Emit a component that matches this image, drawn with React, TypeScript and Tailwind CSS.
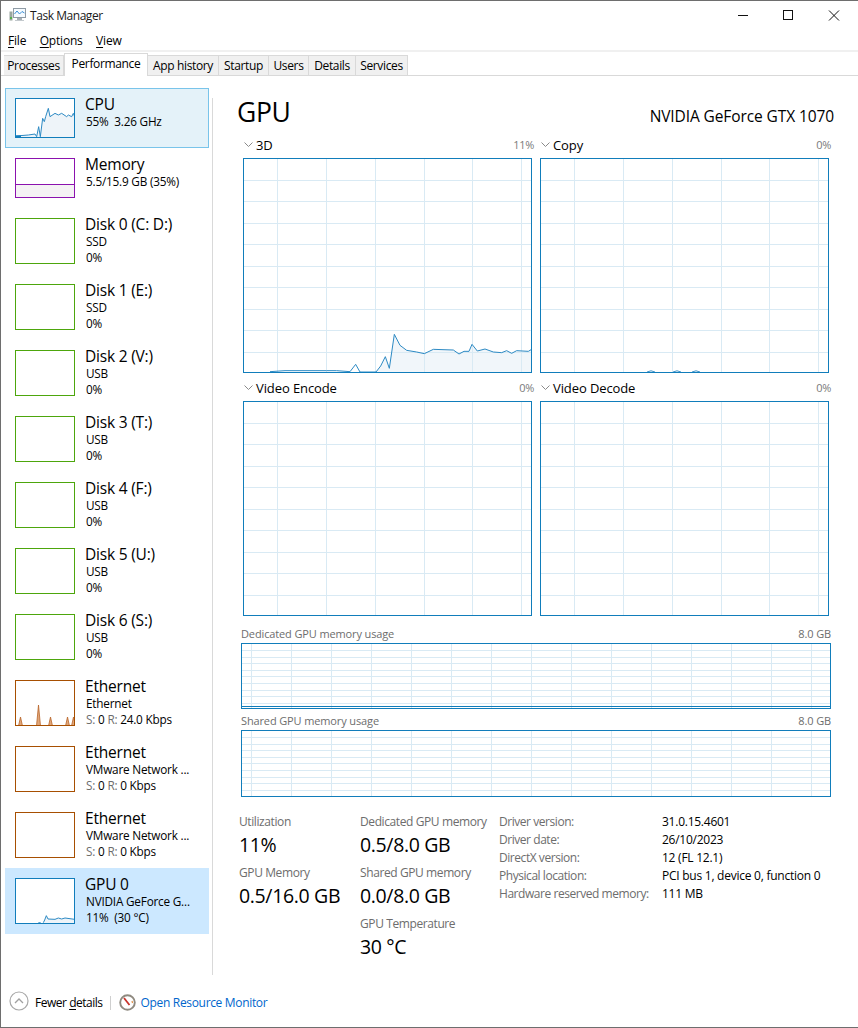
import React from "react";

const BLUE = "#117DBB";
const GRID = "#D9EAF4";
const FILL = "#F1F6FA";

type Pt = [number, number];
const path = (pts: Pt[]) => pts.map((p, i) => `${i ? "L" : "M"}${p[0]} ${p[1]}`).join(" ");

function BigChart({ w, h, xs, ys, children }: { w: number; h: number; xs: number[]; ys: number[]; children?: React.ReactNode }) {
  return (
    <svg width={w} height={h} className="block" shapeRendering="crispEdges">
      <rect width={w} height={h} fill="#fff" />
      {xs.map((x) => (
        <rect key={`x${x}`} x={x} y={0} width={1} height={h} fill={GRID} />
      ))}
      {ys.map((y) => (
        <rect key={`y${y}`} x={0} y={y} width={w} height={1} fill={GRID} />
      ))}
      {children}
      <rect x={0.5} y={0.5} width={w - 1} height={h - 1} fill="none" stroke={BLUE} strokeWidth={1} />
    </svg>
  );
}

const bigXs = [34, 83, 132, 181, 229, 278];
const bigYs = [22, 43, 65, 86, 108, 129, 151, 172, 194];

const raw3d: Pt[] = [
  [90, 215], [135, 212], [260, 212], [290, 212], [330, 215], [347, 193], [360, 216],
  [408, 216], [422, 198], [436, 170], [448, 205], [463, 103], [480, 136], [500, 151],
  [530, 156], [553, 161], [580, 148], [640, 150], [657, 162], [672, 154], [687, 154],
  [696, 133], [712, 153], [735, 147], [760, 156], [785, 158], [800, 152], [815, 160],
  [830, 152], [865, 154], [875, 148],
];
const line3d: Pt[] = raw3d.map(([x, y]) => [x / 3 - 3, y / 3 + 142]);

function Chart3D() {
  const fill = line3d.slice(7);
  return (
    <BigChart w={289} h={215} xs={bigXs} ys={bigYs}>
      <path d={`${path(fill)} L${fill[fill.length - 1][0]} 214 L${fill[0][0]} 214 Z`} fill={FILL} stroke="none" shapeRendering="auto" />
      {bigXs.filter((x) => x > 130).map((x) => <rect key={x} x={x} y={173} width={1} height={41} fill={GRID} />)}
      <rect x={132} y={194} width={156} height={1} fill={GRID} />
      <path d={path(line3d)} fill="none" stroke="#2D8AC4" strokeWidth={1} shapeRendering="auto" />
    </BigChart>
  );
}

function ChartCopy() {
  return (
    <BigChart w={289} h={215} xs={bigXs} ys={bigYs}>
      {[111, 137, 156].map((x) => (
        <path key={x} d={`M${x - 4} 214 L${x} 212.8 L${x + 4} 214`} fill="none" stroke="#3C92C8" shapeRendering="auto" />
      ))}
    </BigChart>
  );
}

const memXs = [10, 50, 90, 130, 170, 210, 250, 290, 330, 370, 410, 450, 490, 530, 570];
const memYs = [7, 14, 20, 27, 33, 40, 47, 53, 60];

function MemChart({ used, h }: { used?: boolean; h: number }) {
  return (
    <BigChart w={590} h={h} xs={memXs} ys={memYs}>
      {used && <rect x={0} y={h - 3} width={590} height={1} fill={BLUE} />}
    </BigChart>
  );
}

function Thumb({ color, h, children }: { color: string; h: number; children?: React.ReactNode }) {
  return (
    <svg width={60} height={h} className="block shrink-0">
      <rect width={60} height={h} fill="#fff" shapeRendering="crispEdges" />
      {children}
      <rect x={0.5} y={0.5} width={59} height={h - 1} fill="none" stroke={color} shapeRendering="crispEdges" />
    </svg>
  );
}

const cpuPts: Pt[] = ([
  [46, 153], [60, 152], [85, 150], [105, 147], [110, 155], [116, 125], [121, 155], [128, 100],
  [133, 110], [137, 95], [145, 70], [150, 95], [165, 85], [175, 90], [185, 85], [200, 95],
  [205, 90], [215, 95], [220, 85], [224, 95],
] as Pt[]).map(([x, y]) => [x / 3 - 15, y / 3 - 13]);

const gpuPts: Pt[] = ([
  [130, 758], [134, 750], [139, 737], [144, 747], [165, 748], [175, 744], [185, 747], [195, 744], [224, 748],
] as Pt[]).map(([x, y]) => [x / 3 - 15, y / 3 - 208]);

function CpuThumb() {
  return (
    <svg width={60} height={40} className="block shrink-0">
      <rect width={60} height={40} fill="#fff" />
      <path d={`${path(cpuPts)} L60 40 L0 40 Z`} fill="#EEF4F9" />
      <path d={path(cpuPts)} fill="none" stroke="#2D8AC4" strokeWidth={1} />
      <rect x={0} y={37.5} width={6} height={2} fill={BLUE} />
      <rect x={0.5} y={0.5} width={59} height={39} fill="none" stroke={BLUE} shapeRendering="crispEdges" />
    </svg>
  );
}

function MemThumb() {
  return (
    <svg width={60} height={40} className="block shrink-0" shapeRendering="crispEdges">
      <rect width={60} height={40} fill="#fff" />
      <rect y={26} width={60} height={14} fill="#F4F2F4" />
      <rect y={26} width={60} height={1} fill="#8B12AE" />
      <rect x={0.5} y={0.5} width={59} height={39} fill="none" stroke="#8B12AE" />
    </svg>
  );
}

function EthThumb({ spikes }: { spikes?: boolean }) {
  const s: [number, number][] = [[5.5, 38], [23.5, 26], [35.5, 38], [52.5, 38], [58.5, 38]];
  return (
    <Thumb color="#A74F01" h={46}>
      {spikes &&
        s.map(([x, y]) => (
          <path key={x} d={`M${x - 2} 46 L${x} ${y - 1} L${x + 2} 46 Z`} fill="#E0A77A" stroke="#B9652A" strokeWidth={0.8} />
        ))}
    </Thumb>
  );
}

function GpuThumb() {
  return (
    <Thumb color={BLUE} h={46}>
      <path d={`${path(gpuPts)} L60 45 L28 45 Z`} fill="#EEF4F9" />
      <path d={path(gpuPts)} fill="none" stroke="#2D8AC4" strokeWidth={1} />
      <path d="M23.5 45 L24.5 44 L25.5 45" fill="none" stroke="#2D8AC4" />
    </Thumb>
  );
}

function SideItem({
  thumb, title, lines, short, state,
}: { thumb: React.ReactNode; title: string; lines: React.ReactNode[]; short?: boolean; state?: "cpu" | "gpu" }) {
  const bg =
    state === "cpu"
      ? "bg-[#E4F2F9] border-[#79C4EA]"
      : state === "gpu"
      ? "bg-[#CCE8FF] border-[#CCE8FF]"
      : "border-transparent";
  return (
    <div className={`${short ? "h-[60px]" : "h-[66px]"} w-[204px] border ${bg} flex gap-[10px] pl-[9px] pt-[9px]`}>
      {thumb}
      <div className="flex flex-col text-black whitespace-pre -mt-[1px]">
        <div className="text-[15.5px] leading-[14px] tracking-[-0.2px] h-[16px]">{title}</div>
        {lines.map((l, i) => (
          <div key={i} className="text-[11.75px] leading-[16px] tracking-[-0.2px] ml-[1px]">{l}</div>
        ))}
      </div>
    </div>
  );
}

const G = ({ children }: { children: React.ReactNode }) => <span className="text-[#6D6D6D]">{children}</span>;

function Tab({ label, w, active }: { label: string; w: string; active?: boolean }) {
  return active ? (
    <div className={`${w} h-[23px] -mt-[2px] -mb-[1px] z-10 bg-white border border-b-0 border-[#D9D9D9] flex justify-center pt-[2px] text-[12px] leading-[16px] tracking-[-0.35px] text-black`}>
      {label}
    </div>
  ) : (
    <div className={`${w} h-[20px] bg-[#F0F0F0] border border-b-0 border-l-0 border-[#D9D9D9] flex justify-center pt-[2px] text-[12px] leading-[16px] tracking-[-0.35px] text-black`}>
      {label}
    </div>
  );
}

function ChartHead({ label, pct }: { label: string; pct: string }) {
  return (
    <div className="h-[25px] flex items-start justify-between pt-[5px]">
      <div className="flex items-center text-[13px] leading-[16px] tracking-[-0.1px] text-black -mt-[1px]">
        <svg width={9} height={6} className="ml-[1px] mr-[3px]"><path d="M0.5 0.5 L4.5 4.5 L8.5 0.5" fill="none" stroke="#8A8A8A" /></svg>
        {label}
      </div>
      <div className="text-[11px] leading-[14px] tracking-[-0.3px] text-[#7A7A7A] -mr-[2px]">{pct}</div>
    </div>
  );
}

function Stat({ label, value }: { label: string; value: string }) {
  return (
    <div className="h-[51px]">
      <div className="text-[12px] leading-[16px] tracking-[-0.4px] text-[#6D6D6D] whitespace-nowrap">{label}</div>
      <div className="text-[19.5px] leading-[26px] mt-[2px] tracking-[-0.35px] text-black whitespace-nowrap">{value}</div>
    </div>
  );
}

const U = ({ children }: { children: React.ReactNode }) => <span className="underline underline-offset-2">{children}</span>;

export default function App() {
  const disks = [
    ["Disk 0 (C: D:)", "SSD"], ["Disk 1 (E:)", "SSD"], ["Disk 2 (V:)", "USB"], ["Disk 3 (T:)", "USB"],
    ["Disk 4 (F:)", "USB"], ["Disk 5 (U:)", "USB"], ["Disk 6 (S:)", "USB"],
  ];
  const props: [string, string][] = [
    ["Driver version:", "31.0.15.4601"],
    ["Driver date:", "26/10/2023"],
    ["DirectX version:", "12 (FL 12.1)"],
    ["Physical location:", "PCI bus 1, device 0, function 0"],
    ["Hardware reserved memory:", "111 MB"],
  ];
  return (
    <div
      className="w-[858px] h-[1028px] bg-white border border-[#6E6E6E] border-r-0 flex flex-col overflow-hidden text-black"
      style={{ fontFamily: '"Open Sans", "Noto Sans", sans-serif' }}
    >
      {/* Title bar */}
      <div className="h-[29px] shrink-0 flex items-center pl-[8px] relative">
        <svg width={17} height={16} viewBox="0 0 17 16" className="mr-[4px] mt-[-1px]">
          <rect x={0.5} y={4.5} width={3} height={9} fill="#9AA6A0" />
          <rect x={1} y={10} width={2} height={2} fill="#55B04A" />
          <rect x={4.5} y={1.5} width={12} height={9} fill="#F6FBFF" stroke="#8F9BA5" />
          <path d="M5.5 7 L8 4 L10.5 7 L13 4.5 L15.5 6" fill="none" stroke="#3B8FD6" />
          <rect x={8} y={11} width={5} height={2} fill="#A6AFB5" />
          <rect x={6} y={13} width={9} height={1} fill="#C3C9CD" />
        </svg>
        <span className="text-[12px] leading-[16px] tracking-[-0.45px] text-[#1a1a1a]">Task Manager</span>
        <div className="ml-auto flex items-center">
          <svg width={45} height={29}><rect x={0} y={14} width={10} height={1} fill="#111" /></svg>
          <svg width={45} height={29}><rect x={0.5} y={9.5} width={9} height={9} fill="none" stroke="#111" /></svg>
          <svg width={30} height={29}><path d="M1 9.5 L11 19.5 M11 9.5 L1 19.5" stroke="#111" fill="none" /></svg>
        </div>
      </div>
      {/* Menu */}
      <div className="h-[17px] shrink-0 flex text-[12px] leading-[16px] tracking-[-0.2px] pl-[7px] gap-[13.5px] pt-[3px] border-b-[2px] border-[#F0F0F0] box-content">
        <span><U>F</U>ile</span>
        <span><U>O</U>ptions</span>
        <span><U>V</U>iew</span>
      </div>
      {/* Tabs */}
      <div className="h-[20px] shrink-0 pt-[4px] pl-[3px] flex border-b border-[#D9D9D9] box-content -mt-[1px]">
        <Tab label="Processes" w="w-[60px] border-l" />
        <Tab label="Performance" w="w-[84px]" active />
        <Tab label="App history" w="w-[71px]" />
        <Tab label="Startup" w="w-[50px]" />
        <Tab label="Users" w="w-[40px]" />
        <Tab label="Details" w="w-[47px]" />
        <Tab label="Services" w="w-[52px]" />
      </div>
      {/* Body */}
      <div className="flex flex-1 min-h-0">
        <aside className="w-[212px] shrink-0 pl-[4px] pt-[12px] relative">
          <div className="absolute right-0 top-[22px] h-[877px] w-px bg-[#D9D9D9]" />
          <SideItem short state="cpu" thumb={<CpuThumb />} title="CPU" lines={["55%  3.26 GHz"]} />
          <SideItem short thumb={<MemThumb />} title="Memory" lines={["5.5/15.9 GB (35%)"]} />
          {disks.map(([t, k]) => (
            <SideItem key={t} thumb={<Thumb color="#4DA60C" h={46} />} title={t} lines={[k, "0%"]} />
          ))}
          <SideItem thumb={<EthThumb spikes />} title="Ethernet" lines={["Ethernet", <><G>S:</G> 0 <G>R:</G> 24.0 Kbps</>]} />
          <SideItem thumb={<EthThumb />} title="Ethernet" lines={["VMware Network ...", <><G>S:</G> 0 <G>R:</G> 0 Kbps</>]} />
          <SideItem thumb={<EthThumb />} title="Ethernet" lines={["VMware Network ...", <><G>S:</G> 0 <G>R:</G> 0 Kbps</>]} />
          <SideItem state="gpu" thumb={<GpuThumb />} title="GPU 0" lines={["NVIDIA GeForce G...", "11%  (30 °C)"]} />
        </aside>
        <main className="flex-1 min-w-0 pl-[28px] pr-[25px] pt-[19px]">
          <div className="flex items-start justify-between h-[37px]">
            <span className="text-[26.5px] leading-[34px] tracking-[-0.3px] ml-[-4px]">GPU</span>
            <span className="text-[15.5px] leading-[20px] tracking-[-0.1px] mt-[11px] mr-[-1px]">NVIDIA GeForce GTX 1070</span>
          </div>
          <div className="grid grid-cols-[289px_289px] gap-x-[8px] gap-y-[3px] ml-[2px] mt-[1px]">
            <div><ChartHead label="3D" pct="11%" /><Chart3D /></div>
            <div><ChartHead label="Copy" pct="0%" /><ChartCopy /></div>
            <div><ChartHead label="Video Encode" pct="0%" /><BigChart w={289} h={215} xs={bigXs} ys={bigYs} /></div>
            <div><ChartHead label="Video Decode" pct="0%" /><BigChart w={289} h={215} xs={bigXs} ys={bigYs} /></div>
          </div>
          <div className="w-[590px] mt-[10px]">
            <div className="flex justify-between h-[17px] text-[11px] leading-[16px] tracking-[-0.13px] text-[#6D6D6D]">
              <span>Dedicated GPU memory usage</span><span>8.0 GB</span>
            </div>
            <MemChart used h={66} />
            <div className="flex justify-between h-[21px] pt-[4px] text-[11px] leading-[16px] tracking-[-0.13px] text-[#6D6D6D]">
              <span>Shared GPU memory usage</span><span>8.0 GB</span>
            </div>
            <MemChart h={67} />
          </div>
          <div className="flex mt-[17px] -ml-[2px]">
            <div className="w-[121px]">
              <Stat label="Utilization" value="11%" />
              <Stat label="GPU Memory" value="0.5/16.0 GB" />
            </div>
            <div className="w-[139px]">
              <Stat label="Dedicated GPU memory" value="0.5/8.0 GB" />
              <Stat label="Shared GPU memory" value="0.0/8.0 GB" />
              <Stat label="GPU Temperature" value="30 °C" />
            </div>
            <div className="grid grid-cols-[163px_auto] auto-rows-[18px] text-[12px] leading-[16px] tracking-[-0.25px] content-start">
              {props.map(([k, v]) => (
                <React.Fragment key={k}>
                  <span className="text-[#6D6D6D] whitespace-nowrap tracking-[-0.45px]">{k}</span>
                  <span className="whitespace-nowrap">{v}</span>
                </React.Fragment>
              ))}
            </div>
          </div>
        </main>
      </div>
      {/* Footer */}
      <div className="h-[52px] shrink-0 flex items-start pl-[8px] pt-[16px]">
        <svg width={20} height={20} viewBox="0 0 20 20" className="shrink-0">
          <circle cx={10} cy={10} r={9} fill="#fff" stroke="#A8A8A8" strokeWidth={1.2} />
          <path d="M6 12 L10 8 L14 12" fill="none" stroke="#A0A0A0" strokeWidth={1.3} />
        </svg>
        <span className="ml-[6px] mt-[2px] text-[12px] leading-[20px] tracking-[-0.48px] text-black">Fewer <U>d</U>etails</span>
        <span className="w-px h-[14px] bg-[#CFCFCF] ml-[7px] mt-[5px]" />
        <svg width={17} height={17} viewBox="0 0 17 17" className="ml-[8px] mt-[3px] shrink-0">
          <circle cx={8.5} cy={8.5} r={7.3} fill="#fff" stroke="#8F8A80" strokeWidth={1.9} />
          <path d="M5 4 L10.5 11" stroke="#C8322A" strokeWidth={1.8} />
          <path d="M13 7 L13.5 9" stroke="#E08A3C" strokeWidth={1.2} />
        </svg>
        <span className="ml-[5px] mt-[2px] text-[12px] leading-[20px] tracking-[-0.33px] text-[#0066CC]">Open Resource Monitor</span>
      </div>
    </div>
  );
}
